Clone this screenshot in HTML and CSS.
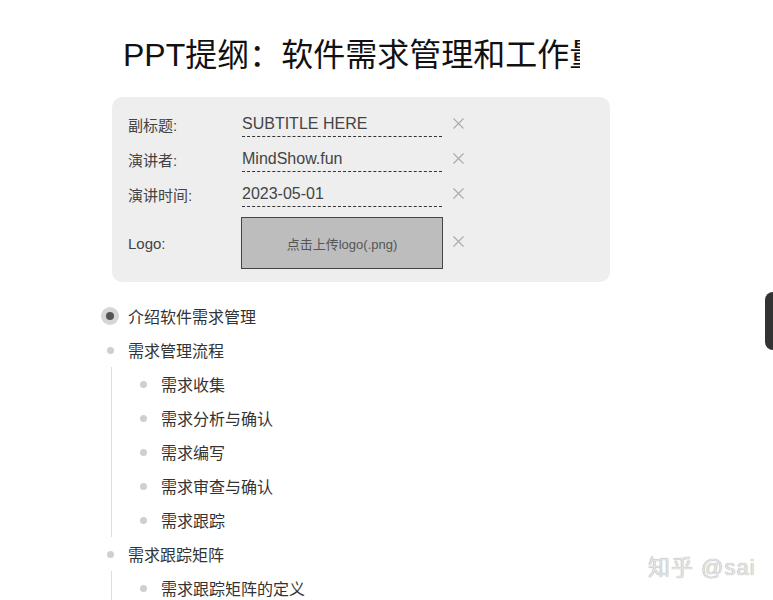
FILE: index.html
```html
<!DOCTYPE html>
<html lang="zh">
<head>
<meta charset="utf-8">
<title>PPT提纲</title>
<link rel="stylesheet" href="styles.css">
</head>
<body>
<div class="page">
  <div class="title">PPT提纲：软件需求管理和工作量估算</div>
  <div class="panel">
    <div class="row">
      <div class="label">副标题:</div>
      <div class="input">SUBTITLE HERE</div>
      <span class="close"><svg width="11" height="11" viewBox="0 0 11 11"><path d="M0.5 0.5L10.5 10.5M10.5 0.5L0.5 10.5" stroke="#aaa" stroke-width="1.1" fill="none"/></svg></span>
    </div>
    <div class="row">
      <div class="label">演讲者:</div>
      <div class="input">MindShow.fun</div>
      <span class="close"><svg width="11" height="11" viewBox="0 0 11 11"><path d="M0.5 0.5L10.5 10.5M10.5 0.5L0.5 10.5" stroke="#aaa" stroke-width="1.1" fill="none"/></svg></span>
    </div>
    <div class="row">
      <div class="label">演讲时间:</div>
      <div class="input">2023-05-01</div>
      <span class="close"><svg width="11" height="11" viewBox="0 0 11 11"><path d="M0.5 0.5L10.5 10.5M10.5 0.5L0.5 10.5" stroke="#aaa" stroke-width="1.1" fill="none"/></svg></span>
    </div>
    <div class="row logo-row">
      <div class="label">Logo:</div>
      <div class="upload">点击上传logo(.png)</div>
      <span class="close"><svg width="11" height="11" viewBox="0 0 11 11"><path d="M0.5 0.5L10.5 10.5M10.5 0.5L0.5 10.5" stroke="#aaa" stroke-width="1.1" fill="none"/></svg></span>
    </div>
  </div>

  <div class="outline">
    <div class="item"><span class="bullet active"><i></i></span><span class="text">介绍软件需求管理</span></div>
    <div class="item"><span class="bullet"><i></i></span><span class="text">需求管理流程</span></div>
    <div class="children">
      <div class="item"><span class="bullet"><i></i></span><span class="text">需求收集</span></div>
      <div class="item"><span class="bullet"><i></i></span><span class="text">需求分析与确认</span></div>
      <div class="item"><span class="bullet"><i></i></span><span class="text">需求编写</span></div>
      <div class="item"><span class="bullet"><i></i></span><span class="text">需求审查与确认</span></div>
      <div class="item"><span class="bullet"><i></i></span><span class="text">需求跟踪</span></div>
    </div>
    <div class="item"><span class="bullet"><i></i></span><span class="text">需求跟踪矩阵</span></div>
    <div class="children">
      <div class="item"><span class="bullet"><i></i></span><span class="text">需求跟踪矩阵的定义</span></div>
    </div>
  </div>
</div>
<div class="side-tab"></div>
<div class="watermark">知乎 @sai</div>
</body>
</html>
```
FILE: styles.css
```css
html, body {
  margin: 0;
  padding: 0;
  height: 600px;
  overflow: hidden;
  background: #fff;
}
body {
  font-family: "Liberation Sans", Arial, "Noto Sans CJK SC", sans-serif;
  color: #333;
}
.page {
  padding: 35px 0 0 101px;
}
.title {
  margin-left: 22px;
  width: 457px;
  height: 40px;
  line-height: 40px;
  font-size: 32px;
  color: #111;
  white-space: nowrap;
  overflow: hidden;
}
.panel {
  margin-top: 22px;
  margin-left: 11px;
  width: 466px;
  padding: 15px 16px 13px 16px;
  background: #eeeeee;
  border-radius: 10px;
  display: flex;
  flex-direction: column;
  gap: 10px;
}
.row {
  display: flex;
  align-items: center;
  height: 25px;
}
.label {
  width: 114px;
  font-size: 15px;
  color: #444;
  flex-shrink: 0;
}
.input {
  width: 200px;
  height: 24px;
  line-height: 24px;
  font-size: 16px;
  color: #444;
  border-bottom: 1px dashed #333;
  white-space: nowrap;
  overflow: hidden;
}
.close {
  display: flex;
  margin-left: 11px;
  margin-top: -2px;
}
.logo-row {
  height: 52px;
}
.upload {
  margin-left: -1px;
  width: 200px;
  height: 50px;
  border: 1px solid #444;
  background: #bdbdbd;
  display: flex;
  align-items: center;
  justify-content: center;
  font-size: 13px;
  color: #555;
}
.logo-row .close {
  margin-left: 10px;
  margin-top: -4px;
}
.outline {
  margin-top: 17px;
}
.item {
  display: flex;
  align-items: center;
  height: 34px;
}
.bullet {
  width: 18px;
  height: 18px;
  display: flex;
  align-items: center;
  justify-content: center;
  border-radius: 50%;
  flex-shrink: 0;
}
.bullet i {
  width: 7px;
  height: 7px;
  border-radius: 50%;
  background: #cfcfcf;
}
.bullet.active {
  background: #d6d6d6;
}
.bullet.active i {
  width: 8px;
  height: 8px;
  background: #555;
}
.text {
  margin-left: 9px;
  font-size: 16px;
  color: #333;
  white-space: nowrap;
}
.children {
  margin-left: 10px;
  padding-left: 22px;
  border-left: 1px solid #dedede;
}
.side-tab {
  position: absolute;
  left: 765px;
  top: 292px;
  width: 20px;
  height: 58px;
  background: #333;
  border-radius: 8px;
}
.watermark {
  position: absolute;
  left: 648px;
  top: 554px;
  font-size: 22px;
  line-height: 28px;
  letter-spacing: 1px;
  color: #e4e4e4;
  text-shadow: 0 0 1px #8a8a8a;
  white-space: nowrap;
}
```
